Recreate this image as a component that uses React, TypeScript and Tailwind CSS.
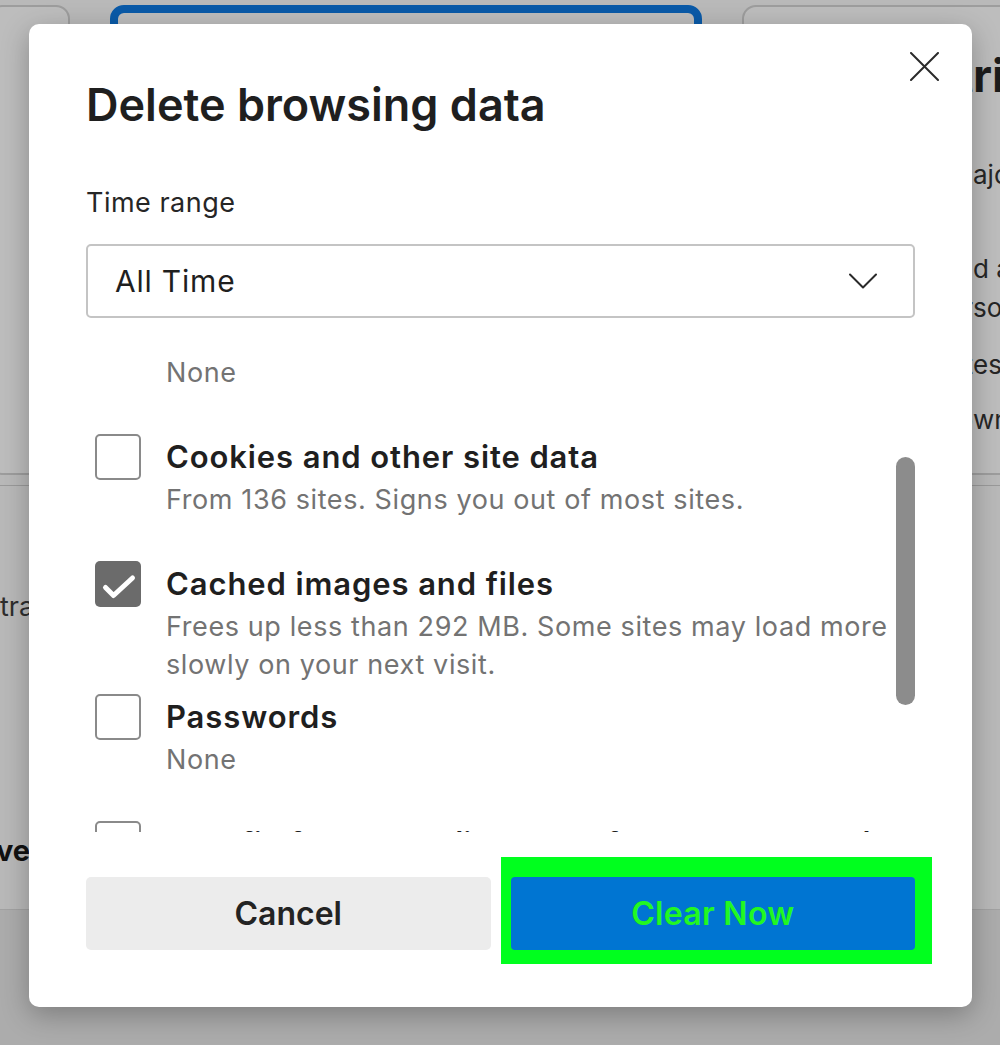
import React from "react";

type Item = { label: string; sub: React.ReactNode; checked?: boolean };

const ITEMS: Item[] = [
  { label: "Browsing history", sub: "None" },
  { label: "Cookies and other site data", sub: "From 136 sites. Signs you out of most sites." },
  {
    label: "Cached images and files",
    checked: true,
    sub: (
      <>
        Frees up less than 292 MB. Some sites may load more
        <br />
        slowly on your next visit.
      </>
    ),
  },
  { label: "Passwords", sub: "None" },
  { label: "Autofill form data (includes forms and cards)", sub: "None" },
];

function CloseIcon() {
  return (
    <svg width="29" height="29" viewBox="0 0 29 29" fill="none">
      <path d="M1 1L28 28M28 1L1 28" stroke="#2a2a2a" strokeWidth="2" strokeLinecap="round" />
    </svg>
  );
}

function Chevron() {
  return (
    <svg width="28" height="16" viewBox="0 0 28 16" fill="none">
      <path d="M1 1.5L14 14.5L27 1.5" stroke="#2a2a2a" strokeWidth="2" strokeLinecap="round" strokeLinejoin="round" />
    </svg>
  );
}

function Checkbox({ checked }: { checked?: boolean }) {
  if (checked) {
    return (
      <div className="w-[46px] h-[46px] mt-[-3px] rounded-[5px] bg-[#6b6b6b] flex items-center justify-center">
        <svg width="46" height="46" viewBox="0 0 46 46" fill="none">
          <path d="M10.5 26.5L18.5 34.5L37.5 17" stroke="#fff" strokeWidth="5" strokeLinecap="round" strokeLinejoin="round" />
        </svg>
      </div>
    );
  }
  return <div className="w-[46px] h-[46px] mt-[-3px] rounded-[5px] border-2 border-[#8a8a8a] bg-white" />;
}

// text line behind the dialog: the hidden part is right-aligned so the shown part starts at the dialog's edge
function Split({ hidden, shown, className }: { hidden: string; shown: string; className?: string }) {
  return (
    <div className={`flex whitespace-nowrap ${className ?? ""}`}>
      <span className="w-[229px] shrink-0 text-right">{hidden}</span>
      <span>{shown}</span>
    </div>
  );
}

export default function App() {
  return (
    <div className="relative w-[1000px] h-[1045px] overflow-hidden bg-[#acacac] font-['Inter',sans-serif]">
      {/* dimmed settings page behind the dialog */}
      <div className="h-[910px] bg-[#b9b9b9] border-b border-[#a2a2a2] flex flex-col">
        <div className="flex gap-[40px] pt-[5px] h-[475px]">
          <div className="-ml-[12px] w-[82px] shrink-0 rounded-[14px] border-2 border-[#9d9d9d] bg-[#bdbdbd]" />
          <div className="w-[592px] shrink-0 rounded-[14px] border-[8px] border-[#0a5aa8] bg-[#bdbdbd]" />
          <div className="w-[300px] shrink-0 rounded-[14px] border-2 border-[#9d9d9d] bg-[#bdbdbd] text-[#262626]">
            <Split hidden="St" shown="rict" className="mt-[40px] text-[46px] leading-[56px] font-bold text-[#1c1c1c]" />
            <Split hidden="a m" shown="ajority of trackers" className="mt-[53px] text-[26px] leading-[38px]" />
            <Split hidden="Content an" shown="d ads will" className="mt-[55px] text-[26px] leading-[39px]" />
            <Split hidden="minimal per" shown="sonalization" className="text-[26px] leading-[39px]" />
            <Split hidden="Parts of sit" shown="es might" className="mt-[19px] text-[26px] leading-[38px]" />
            <Split hidden="Blocks kno" shown="wn harmful" className="mt-[17px] text-[26px] leading-[38px]" />
          </div>
        </div>
        <div className="mt-[10px] h-px bg-[#9a9a9a]" />
        <div className="mt-[102px] text-[27px] leading-[38px] text-[#2e2e2e] whitespace-nowrap">
          tracking prevention when browsing InPrivate
        </div>
        <div className="mt-[205px] -ml-[112px] flex whitespace-nowrap text-[29px] leading-[40px] font-bold text-[#111]">
          <span className="w-[108px] shrink-0 text-right">Ne</span>
          <span>ver clear browsing data</span>
        </div>
      </div>

      {/* dialog */}
      <div className="absolute left-[29px] top-[24px] w-[943px] h-[983px] rounded-[10px] bg-white shadow-[0_8px_28px_rgba(0,0,0,0.28)] px-[57px] pt-[54px] pb-[57px] flex flex-col">
        <button className="absolute right-[33px] top-[28px] w-[29px] h-[29px]">
          <CloseIcon />
        </button>

        <h1 className="text-[45px] leading-[54px] font-semibold text-[#1f1f1f]">Delete browsing data</h1>

        <div className="mt-[54px] text-[27px] leading-[33px] tracking-[0.5px] text-[#262626]">Time range</div>

        <div className="mt-[25px] h-[74px] shrink-0 rounded-[5px] border-2 border-[#c4c4c4] flex items-center justify-between pl-[27px] pr-[36px]">
          <span className="text-[30px] tracking-[0.8px] text-[#1f1f1f]">All Time</span>
          <Chevron />
        </div>

        <div className="mt-[37px] h-[477px] shrink-0 overflow-hidden flex">
          <div className="flex-1 -mt-[45px]">
            {ITEMS.map((it) => (
              <div key={it.label} className="flex min-h-[127px] pb-[13px]">
                <div className="w-[80px] shrink-0 pl-[9px]">
                  <Checkbox checked={it.checked} />
                </div>
                <div className="whitespace-nowrap">
                  <div className="text-[31px] leading-[40px] tracking-[0.9px] font-semibold text-[#1f1f1f]">{it.label}</div>
                  <div className="mt-[4px] text-[27px] leading-[38px] tracking-[0.6px] text-[#737373]">{it.sub}</div>
                </div>
              </div>
            ))}
          </div>
          <div className="w-[19px] shrink-0">
            <div className="mt-[102px] h-[248px] rounded-full bg-[#8c8c8c]" />
          </div>
        </div>

        <div className="mt-[45px] grid grid-cols-2 gap-[20px] h-[73px]">
          <button className="rounded-[5px] bg-[#ececec] text-[32px] font-semibold text-[#232323]">Cancel</button>
          <div className="relative">
            <div className="absolute -left-[10px] -right-[17px] -top-[20px] -bottom-[14px] bg-[#00ff1e]" />
            <button className="relative w-full h-full rounded-[4px] bg-[#0075d2] text-[32px] tracking-[0.3px] font-semibold text-[#22f722]">
              Clear Now
            </button>
          </div>
        </div>
      </div>
    </div>
  );
}
